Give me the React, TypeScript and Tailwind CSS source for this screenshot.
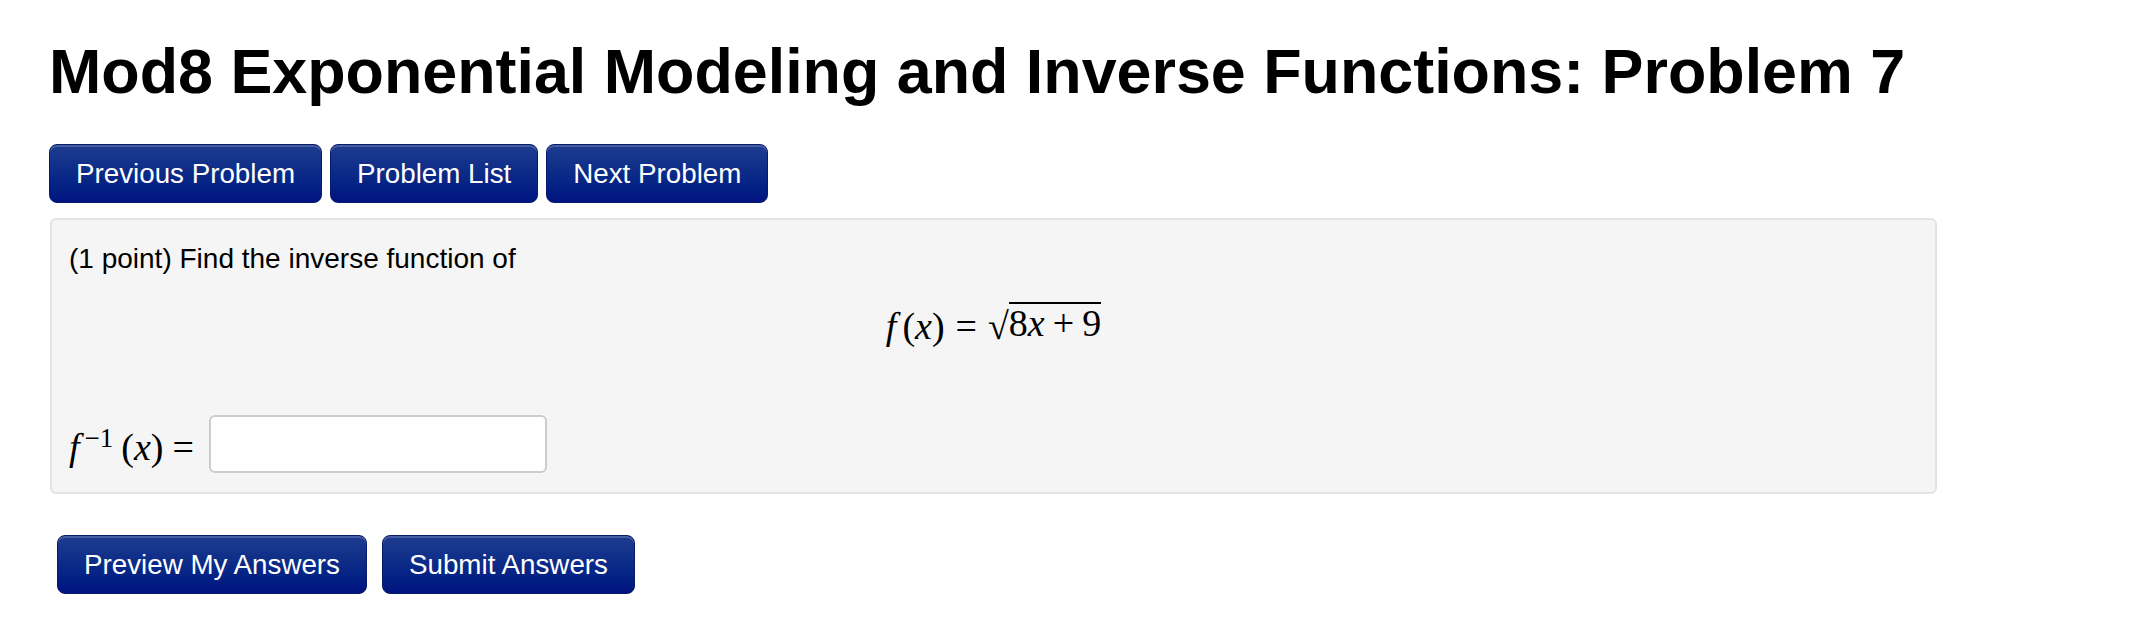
import React from "react";

function Btn({ children }: { children: React.ReactNode }) {
  return (
    <button
      type="button"
      className="flex h-[59px] items-center rounded-[8px] border border-[#071a6c] bg-linear-to-b from-[#1e3c8e] to-[#001380] px-[26px] text-[27.75px] leading-none text-white shadow-[inset_0_2px_0_rgba(255,255,255,0.18)]"
      style={{ fontFamily: '"Liberation Sans", Arial, Helvetica, sans-serif' }}
    >
      {children}
    </button>
  );
}

const serif = { fontFamily: '"Liberation Serif", "Times New Roman", serif' };

export default function App() {
  return (
    <div
      className="h-[620px] w-full bg-white px-[49px] text-black"
      style={{ fontFamily: '"Liberation Sans", Arial, Helvetica, sans-serif' }}
    >
      <h1 className="pt-[34px] text-[62.8px] font-bold leading-[75px]">
        Mod8 Exponential Modeling and Inverse Functions: Problem 7
      </h1>

      <div className="mt-[35px] flex gap-[8px]">
        <Btn>Previous Problem</Btn>
        <Btn>Problem List</Btn>
        <Btn>Next Problem</Btn>
      </div>

      <div className="ml-[1px] mt-[15px] w-[1887px] rounded-[6px] border-2 border-[#e3e3e3] bg-[#f5f5f5] pb-[19px] pl-[17px] pt-[19px]">
        <div className="text-[28px] leading-[40px]">(1 point) Find the inverse function of</div>

        <div className="mt-[21px] flex h-[52px] items-center justify-center pr-[17px] text-[38px]" style={serif}>
          <span className="italic">f</span>
          <span className="ml-[6px]">(</span>
          <span className="italic">x</span>
          <span>)</span>
          <span className="mx-[11px]">=</span>
          <span className="flex items-start">
            <span className="mt-[1px]">√</span>
            <span className="mt-[5px] border-t-2 border-black leading-[38px]">
              8<span className="italic">x</span>
              <span className="mx-[8px]">+</span>9
            </span>
          </span>
        </div>

        <div className="mt-[63px] flex h-[58px] items-center">
          <span className="mt-[7px] flex items-baseline text-[38px]" style={serif}>
            <span className="italic">f</span>
            <span className="relative -top-[13px] ml-[5px] text-[27px]">−1</span>
            <span className="ml-[8px]">(</span>
            <span className="italic">x</span>
            <span>)</span>
            <span className="ml-[9px]">=</span>
          </span>
          <input
            type="text"
            className="ml-[15px] h-[58px] w-[338px] rounded-[6px] border-2 border-[#cccccc] bg-white px-3 text-[26px] outline-none"
          />
        </div>
      </div>

      <div className="ml-[8px] mt-[41px] flex gap-[15px]">
        <Btn>Preview My Answers</Btn>
        <Btn>Submit Answers</Btn>
      </div>
    </div>
  );
}
